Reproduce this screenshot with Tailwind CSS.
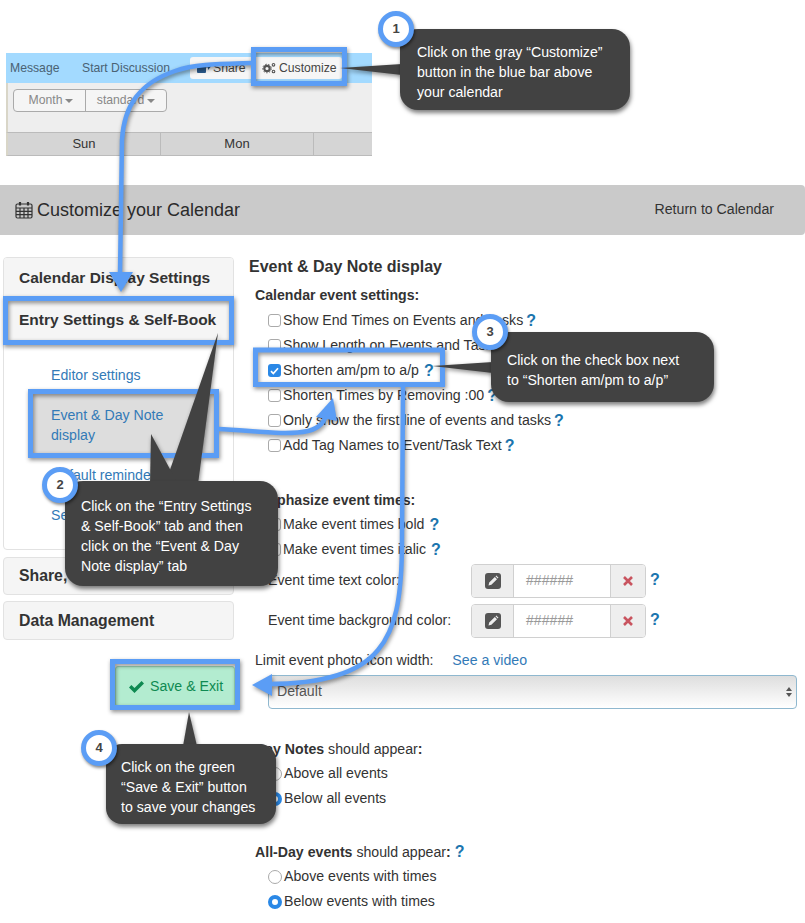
<!DOCTYPE html>
<html lang="en">
<head>
<meta charset="UTF-8">
<title>Customize your Calendar</title>
<script src="https://cdn.jsdelivr.net/npm/@tailwindcss/browser@4"></script>
</head>
<body class="bg-white">
<div class="relative w-[805px] h-[923px] overflow-hidden font-['Liberation_Sans',Arial,sans-serif] text-[14.15px] text-[#333] bg-white">

  <!-- cropped calendar toolbar -->
  <div class="pt-[53px] pl-[6px]">
    <div class="w-[366px] h-[103px] flex flex-col text-[12.2px]">
      <div class="h-[30px] bg-[#a3daff] flex items-center pl-[4px] text-[#4a6274]">
        <span class="w-[72px]">Message</span>
        <span class="w-[108px]">Start Discussion</span>
        <div class="h-[22px] w-[152px] bg-[#f6f6f6] rounded-[3px] flex items-center text-[#444]">
          <span class="w-[72px] pl-[7px] flex items-center gap-[2px]">
            <svg width="14" height="11" viewBox="0 0 14 11" fill="#2a5a8c"><rect x="0" y="3" width="9" height="8" rx="1"/><path d="M8 4h3V1l3 3.500-3 3.500V5.500H8z"/></svg>
            Share
          </span>
          <span class="flex items-center gap-[3px]">
            <svg width="14" height="12" viewBox="0 0 14 12" fill="none" stroke="#555"><circle cx="5" cy="6.500" r="2.700" stroke-width="2.200"/><circle cx="5" cy="6.500" r="4.300" stroke-width="1" stroke-dasharray="1.500 1.500"/><circle cx="11.500" cy="2.800" r="1.300" stroke-width="1.100"/><circle cx="11.500" cy="9.500" r="1.300" stroke-width="1.100"/></svg>
            Customize
          </span>
        </div>
      </div>
      <div class="h-[49px] bg-[#eeeeee] border-l-[2px] border-[#d9d6c8] pl-[5px] pt-[6px]">
        <div class="w-[154px] h-[23px] flex bg-white/40 border border-[#aaa] rounded-[4px] text-[#888]">
          <div class="w-[72px] flex items-center justify-center gap-[3px] pl-[3px] border-r border-[#aaa]">Month <span class="w-0 h-0 border-x-[4px] border-x-transparent border-t-[4px] border-t-[#888]"></span></div>
          <div class="flex-1 flex items-center justify-center gap-[3px]">standard <span class="w-0 h-0 border-x-[4px] border-x-transparent border-t-[4px] border-t-[#888]"></span></div>
        </div>
      </div>
      <div class="h-[24px] bg-[#d5d5d5] border-y border-[#bbb] border-l-[2px] border-l-[#d9d6c8] flex text-[#333] text-[13px]">
        <div class="w-[153px] border-r border-[#bbb] flex items-center justify-center">Sun</div>
        <div class="w-[153px] border-r border-[#bbb] flex items-center justify-center">Mon</div>
      </div>
    </div>
  </div>

  <!-- title bar -->
  <div class="mt-[29px] h-[50px] bg-[#cacaca] rounded-r-[4px] flex items-center justify-between pl-[15px] pr-[31px]">
    <div class="flex items-center gap-[4px] text-[18px] text-[#2b2b2b]">
      <svg width="18" height="18" viewBox="0 0 18 18" fill="none" stroke="#333" stroke-width="1.200"><rect x="1" y="3" width="16" height="14" rx="1.500"/><path d="M1 7h16M1 10.300h16M1 13.600h16M5 7v10M9 7v10M13 7v10"/><path d="M5 1v3.500M13 1v3.500" stroke-width="2.200"/></svg>
      <span>Customize your Calendar</span>
    </div>
    <span>Return to Calendar</span>
  </div>

  <div class="flex mt-[22px]">
    <!-- sidebar -->
    <div class="w-[231px] ml-[3px] shrink-0">
      <div class="border border-[#e2e2e2] rounded-[4px] h-[293px] overflow-hidden">
        <div class="h-[39px] bg-[#f5f5f5] flex items-center pl-[15px] text-[15.5px] font-bold">Calendar Display Settings</div>
        <div class="h-[45px] bg-[#f5f5f5] flex items-center pl-[15px] text-[15.5px] font-bold">Entry Settings &amp; Self-Book</div>
        <div class="pt-[12px] pl-[29px] pr-[19px] text-[#337ab7] leading-[20px]">
          <div class="h-[40px] pl-[18px] pt-[11px]">Editor settings</div>
          <div class="h-[59px] bg-[#dddddd] pl-[18px] pt-[11px] pr-[40px]">Event &amp; Day Note display</div>
          <div class="h-[40px] pl-[18px] pt-[12px]">Default reminders</div>
          <div class="h-[40px] pl-[18px] pt-[12px]">Settings</div>
        </div>
      </div>
      <div class="mt-[7px] h-[38px] border border-[#e2e2e2] rounded-[4px] bg-[#f5f5f5] flex items-center pl-[15px] text-[15.8px] font-bold">Share, Print</div>
      <div class="mt-[6px] h-[39px] border border-[#e2e2e2] rounded-[4px] bg-[#f5f5f5] flex items-center pl-[15px] text-[15.8px] font-bold">Data Management</div>
      <div class="mt-[26px] ml-[112px] w-[120px] h-[41px] bg-[#b3ecd0] border border-[#9bd8ba] rounded-[3px] flex items-center pl-[12px] gap-[5px] text-[#0f8a52]">
        <svg width="17" height="14" viewBox="0 0 17 14" fill="#0f8a52"><path d="M1 7.500 3.400 5l3.100 3.100L13.600 1 16 3.400 6.500 13z"/></svg>
        <span>Save &amp; Exit</span>
      </div>
    </div>

    <!-- settings column -->
    <div class="ml-[15px] flex-1">
      <h2 class="h-[20px] leading-[20px] font-bold text-[16px]">Event &amp; Day Note display</h2>
      <div class="pl-[6px] mt-[6px] flex flex-col">
        <div class="h-[25px] leading-[25px] font-bold">Calendar event settings:</div>
        <div class="pl-[13px]">
          <div class="h-[25px] flex items-center gap-[2px]"><span class="w-[13px] h-[13px] border border-[#aaa] rounded-[3px] bg-white"></span>Show End Times on Events and Tasks <b class="text-[16px] text-[#1b75ae] ml-[1px]">?</b></div>
          <div class="h-[25px] flex items-center gap-[2px]"><span class="w-[13px] h-[13px] border border-[#aaa] rounded-[3px] bg-white"></span>Show Length on Events and Tasks <b class="text-[16px] text-[#1b75ae] ml-[1px]">?</b></div>
          <div class="h-[25px] flex items-center gap-[2px]"><span class="w-[13px] h-[13px] rounded-[3px] bg-[#2a88e6] flex items-center justify-center"><svg width="9" height="8" viewBox="0 0 9 8" fill="none" stroke="#fff" stroke-width="1.700"><path d="M1 4.200 3.300 6.500 8 1.200"/></svg></span>Shorten am/pm to a/p <b class="text-[16px] text-[#1b75ae] ml-[3px]">?</b></div>
          <div class="h-[25px] flex items-center gap-[2px]"><span class="w-[13px] h-[13px] border border-[#aaa] rounded-[3px] bg-white"></span>Shorten Times by Removing :00 <b class="text-[16px] text-[#1b75ae] ml-[1px]">?</b></div>
          <div class="h-[25px] flex items-center gap-[2px]"><span class="w-[13px] h-[13px] border border-[#aaa] rounded-[3px] bg-white"></span>Only show the first line of events and tasks <b class="text-[16px] text-[#1b75ae] ml-[1px]">?</b></div>
          <div class="h-[25px] flex items-center gap-[2px]"><span class="w-[13px] h-[13px] border border-[#aaa] rounded-[3px] bg-white"></span>Add Tag Names to Event/Task Text <b class="text-[16px] text-[#1b75ae] ml-[1px]">?</b></div>
        </div>

        <div class="mt-[30px] h-[24px] leading-[25px] font-bold">Emphasize event times:</div>
        <div class="pl-[13px]">
          <div class="h-[25px] flex items-center gap-[2px]"><span class="w-[13px] h-[13px] border border-[#aaa] rounded-[3px] bg-white"></span>Make event times bold <b class="text-[16px] text-[#1b75ae] ml-[3px]">?</b></div>
          <div class="h-[25px] flex items-center gap-[2px]"><span class="w-[13px] h-[13px] border border-[#aaa] rounded-[3px] bg-white"></span>Make event times italic <b class="text-[16px] text-[#1b75ae] ml-[3px]">?</b></div>
          <div class="-mt-[1px] h-[40px] flex items-center">
            <span class="w-[203px]">Event time text color:</span>
            <div class="w-[175px] h-[34px] flex border border-[#d0d0d0] rounded-[4px] overflow-hidden">
              <div class="w-[42px] bg-[#eeeeee] border-r border-[#d0d0d0] flex items-center justify-center">
                <svg width="16" height="16" viewBox="0 0 16 16"><rect width="16" height="16" rx="3" fill="#555"/><path d="M3.500 12.500l.7-2.900 5.600-5.600 2.200 2.200-5.600 5.600zM10.500 3.300l.8-.8 2.200 2.200-.8.8z" fill="#eee"/></svg>
              </div>
              <div class="w-[96px] bg-white flex items-center pl-[12px] text-[#999]">######</div>
              <div class="flex-1 bg-[#eeeeee] border-l border-[#d0d0d0] flex items-center justify-center">
                <svg width="10" height="10" viewBox="0 0 10 10" fill="none" stroke="#c9545f" stroke-width="2.600"><path d="M1 1l8 8M9 1 1 9"/></svg>
              </div>
            </div>
            <b class="text-[16px] text-[#1b75ae] ml-[4px] -mt-[3px]">?</b>
          </div>
          <div class="h-[40px] flex items-center">
            <span class="w-[203px]">Event time background color:</span>
            <div class="w-[175px] h-[34px] flex border border-[#d0d0d0] rounded-[4px] overflow-hidden">
              <div class="w-[42px] bg-[#eeeeee] border-r border-[#d0d0d0] flex items-center justify-center">
                <svg width="16" height="16" viewBox="0 0 16 16"><rect width="16" height="16" rx="3" fill="#555"/><path d="M3.500 12.500l.7-2.900 5.600-5.600 2.200 2.200-5.600 5.600zM10.500 3.300l.8-.8 2.200 2.200-.8.8z" fill="#eee"/></svg>
              </div>
              <div class="w-[96px] bg-white flex items-center pl-[12px] text-[#999]">######</div>
              <div class="flex-1 bg-[#eeeeee] border-l border-[#d0d0d0] flex items-center justify-center">
                <svg width="10" height="10" viewBox="0 0 10 10" fill="none" stroke="#c9545f" stroke-width="2.600"><path d="M1 1l8 8M9 1 1 9"/></svg>
              </div>
            </div>
            <b class="text-[16px] text-[#1b75ae] ml-[4px] -mt-[3px]">?</b>
          </div>
        </div>

        <div class="mt-[7px] h-[25px] leading-[25px]">Limit event photo icon width: <a class="text-[#337ab7] ml-[15px]">See a video</a></div>
        <div class="ml-[13px] mt-[2px] w-[529px] h-[34px] border border-[#8fb8cf] rounded-[4px] bg-gradient-to-b from-[#dedede] to-white flex items-center justify-between pl-[8px] pr-[4px] text-[#555]">
          <span>Default</span>
          <span class="flex flex-col gap-[2px]">
            <span class="w-0 h-0 border-x-[3px] border-x-transparent border-b-[4px] border-b-[#555]"></span>
            <span class="w-0 h-0 border-x-[3px] border-x-transparent border-t-[4px] border-t-[#555]"></span>
          </span>
        </div>

        <div class="mt-[28px] h-[24px] leading-[25px]"><b>Day Notes</b> should appear<b>:</b></div>
        <div class="pl-[13px]">
          <div class="h-[25px] flex items-center gap-[2px]"><span class="w-[14px] h-[14px] border border-[#aaa] rounded-full bg-white"></span>Above all events</div>
          <div class="h-[25px] flex items-center gap-[2px]"><span class="w-[14px] h-[14px] border-[4.5px] border-[#2a88e6] rounded-full bg-white"></span>Below all events</div>
        </div>

        <div class="mt-[28px] h-[25px] leading-[25px]"><b>All-Day events</b> should appear<b>:</b> <b class="text-[16px] text-[#1b75ae]">?</b></div>
        <div class="pl-[13px]">
          <div class="h-[25px] flex items-center gap-[2px]"><span class="w-[14px] h-[14px] border border-[#aaa] rounded-full bg-white"></span>Above events with times</div>
          <div class="h-[25px] flex items-center gap-[2px]"><span class="w-[14px] h-[14px] border-[4.5px] border-[#2a88e6] rounded-full bg-white"></span>Below events with times</div>
        </div>
      </div>
    </div>
  </div>

  <!-- annotation layer: highlight boxes and arrows -->
  <svg class="absolute inset-0 drop-shadow-[1px_2px_2px_rgba(0,0,0,0.45)]" width="805" height="923" viewBox="0 0 805 923" fill="none">
    <g stroke="#5b9df5" stroke-width="5">
      <rect x="253.500" y="49.500" width="91" height="34"/>
      <rect x="5.500" y="298.500" width="226" height="44"/>
      <rect x="30.500" y="391.500" width="186" height="64"/>
      <rect x="255.500" y="350" width="187" height="34.500"/>
      <rect x="112.500" y="661.500" width="125" height="46"/>
      <path d="M252 63C220 64 195 64 175 71C140 83 124 105 122 140L120 275" stroke-width="4.500"/>
      <path d="M218 429C250 430 285 436 308 431C320 428 325 422 328 410" stroke-width="4.500"/>
      <path d="M403 386L402 540C402 600 395 630 378 650C355 678 310 684 268 684" stroke-width="4.500"/>
    </g>
    <g fill="#5b9df5">
      <path d="M109 272H133L121 292z"/>
      <path d="M333 398 316 417 337 421z"/>
      <path d="M252 685 272 674V696z"/>
    </g>
    <g fill="#424242">
      <path d="M340 68 402 64V75z"/>
      <path d="M218 333 198 484H165z"/>
      <path d="M151 434 178 484H150z"/>
      <path d="M432 366 493 362V373z"/>
      <path d="M189 712 197 746H183z"/>
    </g>
  </svg>

  <!-- callouts -->
  <div class="absolute left-[400px] top-[29px] w-[230px] h-[81px] bg-[#424242] rounded-[18px] shadow-[1px_3px_4px_rgba(0,0,0,0.5)] pl-[17px] pt-[13px] text-white leading-[20px]">Click on the gray “Customize”<br>button in the blue bar above<br>your calendar</div>
  <div class="absolute left-[65px] top-[481px] w-[213px] h-[105px] bg-[#424242] rounded-[18px] shadow-[1px_3px_4px_rgba(0,0,0,0.5)] pl-[16px] pt-[15px] text-white leading-[20px]">Click on the “Entry Settings<br>&amp; Self-Book” tab and then<br>click on the “Event &amp; Day<br>Note display” tab</div>
  <div class="absolute left-[491px] top-[332px] w-[223px] h-[70px] bg-[#424242] rounded-[18px] shadow-[1px_3px_4px_rgba(0,0,0,0.5)] pl-[16px] pt-[18px] text-white leading-[20px]">Click on the check box next<br>to “Shorten am/pm to a/p”</div>
  <div class="absolute left-[106px] top-[744px] w-[170px] h-[80px] bg-[#424242] rounded-[16px] shadow-[1px_3px_4px_rgba(0,0,0,0.5)] pl-[15px] pt-[13px] text-white leading-[20px]">Click on the green<br>“Save &amp; Exit” button<br>to save your changes</div>

  <!-- number badges -->
  <div class="absolute left-[378px] top-[11px] w-[36px] h-[36px] rounded-full bg-white border-[5px] border-[#5b9df5] shadow-[1px_2px_3px_rgba(0,0,0,0.45)] flex items-center justify-center text-[13px] font-bold text-[#444]">1</div>
  <div class="absolute left-[42px] top-[467px] w-[36px] h-[36px] rounded-full bg-white border-[5px] border-[#5b9df5] shadow-[1px_2px_3px_rgba(0,0,0,0.45)] flex items-center justify-center text-[13px] font-bold text-[#444]">2</div>
  <div class="absolute left-[472px] top-[314px] w-[36px] h-[36px] rounded-full bg-white border-[5px] border-[#5b9df5] shadow-[1px_2px_3px_rgba(0,0,0,0.45)] flex items-center justify-center text-[13px] font-bold text-[#444]">3</div>
  <div class="absolute left-[81px] top-[730px] w-[36px] h-[36px] rounded-full bg-white border-[5px] border-[#5b9df5] shadow-[1px_2px_3px_rgba(0,0,0,0.45)] flex items-center justify-center text-[13px] font-bold text-[#444]">4</div>
</div>
</body>
</html>
